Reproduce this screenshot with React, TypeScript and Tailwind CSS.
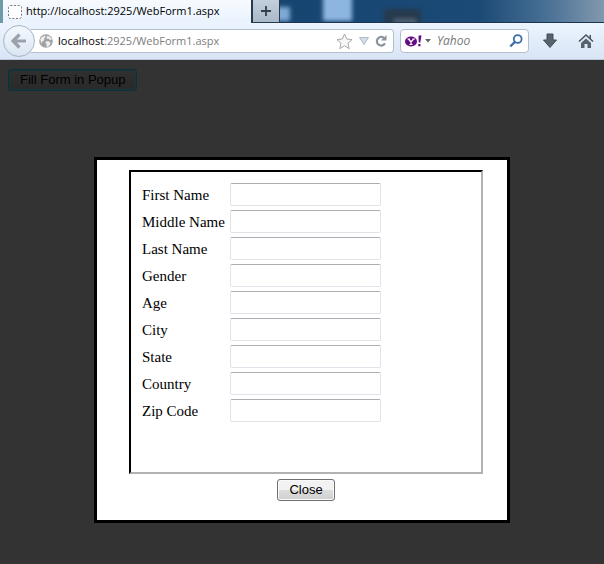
import React from "react";

const FIELDS = [
  "First Name",
  "Middle Name",
  "Last Name",
  "Gender",
  "Age",
  "City",
  "State",
  "Country",
  "Zip Code",
];

const UI_FONT = "font-['Open_Sans','Noto_Sans',sans-serif]";

function TabStrip() {
  return (
    <div className="relative flex h-[23px] overflow-hidden bg-linear-to-r from-[#6f9aa8] from-0% via-[#17456f] via-60% to-[#8099af]">
      <svg
        className="absolute inset-y-0 right-0 h-full w-[352px]"
        viewBox="0 0 352 23"
        preserveAspectRatio="none"
        aria-hidden="true"
      >
        <defs>
          <filter id="soft" x="-30%" y="-30%" width="160%" height="160%">
            <feGaussianBlur stdDeviation="2" />
          </filter>
          <linearGradient id="sky" x1="0" x2="1" y1="0" y2="0">
            <stop offset="0" stopColor="#164470" />
            <stop offset="0.65" stopColor="#1b4a76" />
            <stop offset="0.85" stopColor="#4d7397" />
            <stop offset="1" stopColor="#8299ae" />
          </linearGradient>
        </defs>
        <rect width="352" height="23" fill="url(#sky)" />
        <g filter="url(#soft)">
          <rect x="20" y="7" width="18" height="14" fill="#7fa9d4" />
          <rect x="71" y="-4" width="29" height="25" fill="#8db5e0" />
          <rect x="132" y="9" width="37" height="18" fill="#263a4e" />
          <rect x="142" y="19" width="22" height="6" fill="#4f6475" />
        </g>
        <rect y="22" width="352" height="1" fill="#1c3550" />
      </svg>
      <div className="relative ml-[3px] flex w-[248px] items-center bg-linear-to-b from-[#f7fbff] to-[#e9f2fd] pl-[5px]">
        <svg width="14" height="14" viewBox="0 0 14 14" aria-hidden="true">
          <rect x="0.5" y="0.5" width="13" height="13" rx="2" fill="#fff" stroke="#777" strokeDasharray="2 1.6" />
        </svg>
        <span className="ml-1 whitespace-nowrap text-[11px] text-black">http://localhost:2925/WebForm1.aspx</span>
      </div>
      <button
        type="button"
        aria-label="New tab"
        className="relative flex w-[29px] items-center justify-center border-l-2 border-r border-b border-[#273a4d] bg-linear-to-b from-[#c3cfdb] to-[#aab9c8]"
      >
        <svg width="12" height="12" viewBox="0 0 12 12" aria-hidden="true">
          <path d="M6 1v10M1 6h10" stroke="#33404d" strokeWidth="1.8" />
        </svg>
      </button>
    </div>
  );
}

function NavBar() {
  return (
    <div className="flex h-[37px] items-center border-b border-[#b9c7d8] bg-linear-to-b from-[#ecf4fe] to-[#d8e5f5] pl-[3px] pr-[10px]">
      <button
        type="button"
        aria-label="Back"
        className="relative flex size-8 shrink-0 items-center justify-center rounded-full border border-[#a9b5c3] bg-linear-to-b from-[#f4f8fd] to-[#dbe6f3]"
      >
        <svg width="16" height="16" viewBox="0 0 16 16" aria-hidden="true">
          <path d="M8.5 1.5 2 8l6.500 6.500M2.500 8H15" fill="none" stroke="#9aa2ab" strokeWidth="3.200" />
        </svg>
      </button>
      <div className="-ml-1 flex h-6 min-w-0 flex-1 items-center rounded-r-sm border border-l-0 border-[#b3bfcd] bg-white pl-2 pr-[6px]">
        <svg className="shrink-0" width="14" height="14" viewBox="0 0 14 14" aria-hidden="true">
          <circle cx="7" cy="7" r="6.800" fill="#a2a2a2" />
          <path d="M1.200 5.500 3 3l3-1.500.5 1.500-1.500 1.500.5 1.500-2 1.500-1 2zM8 2l3 .5 2 3-2 .5-1.500-1.500L8 5 7.500 3.500zM6 8l3-1 2.500 1.500-.5 2L9 13l-1.500-.5L7.500 10z" fill="#eee" />
        </svg>
        <div className="ml-[5px] flex-1 whitespace-nowrap text-[11px] text-[#7d7d7d]">
          <span className="text-black">localhost</span>:2925/WebForm1.aspx
        </div>
        <button type="button" aria-label="Bookmark" className="mr-[6px]">
          <svg className="block" width="17" height="17" viewBox="0 0 17 17" aria-hidden="true">
            <path d="m8.500 1 2.200 5 5.300.6-4 3.600 1.200 5.500-4.700-2.900-4.700 2.900L5 10.200 1 6.600 6.300 6z" fill="#f7f7f7" stroke="#a9a9a9" strokeLinejoin="round" />
          </svg>
        </button>
        <button type="button" aria-label="History" className="mr-[6px]">
          <svg className="block" width="10" height="8" viewBox="0 0 10 8" aria-hidden="true">
            <path d="M.5.5h9L5 7.500z" fill="#d5dbe8" stroke="#b1b8c6" />
          </svg>
        </button>
        <button type="button" aria-label="Reload">
          <svg className="block" width="12" height="12" viewBox="0 0 12 12" aria-hidden="true">
            <path d="M8.800 2.800A4.300 4.300 0 1 0 10 8.300" fill="none" stroke="#8b929b" strokeWidth="2.200" />
            <path d="M11.500 0v5.500H6z" fill="#8b929b" />
          </svg>
        </button>
      </div>
      <div className="ml-[6px] flex h-6 w-[129px] items-center rounded-sm border border-[#b3bfcd] bg-white pl-1 pr-[5px]">
        <svg className="shrink-0" width="17" height="12" viewBox="0 0 17 12" aria-hidden="true">
          <ellipse cx="6" cy="6.500" rx="6" ry="5" fill="#650b86" />
          <path d="m3.500 4 2.500 3 2.500-3M6 7v2.500M2.500 4h2.500M7.500 4H10M4.500 9.500h3" fill="none" stroke="#fff" strokeWidth="1.200" />
          <path d="M13.500.5h3l-1.200 7h-1.600zM13.300 9h2.200v2.200h-2.200z" fill="#650b86" />
        </svg>
        <svg className="ml-[3px] shrink-0" width="6" height="4" viewBox="0 0 6 4" aria-hidden="true">
          <path d="M0 0h6L3 3.500z" fill="#666" />
        </svg>
        <input
          type="text"
          aria-label="Search"
          placeholder="Yahoo"
          className="ml-[6px] w-0 min-w-0 flex-1 text-xs italic outline-none placeholder:text-[#777]"
        />
        <button type="button" aria-label="Go">
          <svg className="block" width="14" height="14" viewBox="0 0 14 14" aria-hidden="true">
            <circle cx="8.700" cy="5" r="3.900" fill="none" stroke="#3c6ea8" strokeWidth="1.800" />
            <path d="M5.800 8 1.300 12.500" stroke="#3c6ea8" strokeWidth="2.400" />
          </svg>
        </button>
      </div>
      <button type="button" aria-label="Downloads" className="ml-[14px]">
        <svg className="block" width="14" height="16" viewBox="0 0 14 16" aria-hidden="true">
          <path d="M4 1h6v6h3.500L7 14.500.5 7H4z" fill="#59636e" stroke="#434c56" />
        </svg>
      </button>
      <button type="button" aria-label="Home" className="ml-[21px]">
        <svg className="block" width="16" height="16" viewBox="0 0 16 16" aria-hidden="true">
          <path d="M1 8.500 8 2l7 6.500" fill="none" stroke="#4b555f" strokeWidth="1.600" />
          <path d="M3 10l5-4.500 5 4.500v5H9.500v-4h-3v4H3z" fill="#59636e" />
          <path d="M11.500 2H13v4l-1.500-1.300z" fill="#4b555f" />
        </svg>
      </button>
    </div>
  );
}

function PopupForm() {
  return (
    <div className="absolute inset-x-0 top-[97px] mx-auto w-[416px] border-[3px] border-black bg-white pt-[10px] pb-[19px] pl-2">
      <form className="flex flex-col items-center" onSubmit={(e) => e.preventDefault()}>
        <div className="h-[304px] w-[354px] border-2 border-t-black border-r-[#b2b2b2] border-b-[#b2b2b2] border-l-black p-2">
          <div className="grid grid-cols-[84px_151px] gap-x-1 gap-y-1 p-[3px] font-['Liberation_Serif',serif] text-[15px] leading-6 text-black">
            {FIELDS.map((name) => (
              <React.Fragment key={name}>
                <label htmlFor={name} className="h-[23px] whitespace-nowrap">
                  {name}
                </label>
                <input
                  id={name}
                  type="text"
                  className="h-[23px] w-full rounded-[2px] border border-[#e2e3ea] border-t-[#abadb3] bg-white px-1 text-sm outline-none"
                />
              </React.Fragment>
            ))}
          </div>
        </div>
        <button
          type="button"
          className="mt-[5px] h-[22px] rounded-[3px] border border-[#707070] bg-linear-to-b from-[#f2f2f2] from-50% via-[#dddddd] via-50% to-[#cfcfcf] px-[11px] font-['Liberation_Sans',sans-serif] text-[13px] leading-5 text-black shadow-[inset_0_0_0_1px_#fafafa]"
        >
          Close
        </button>
      </form>
    </div>
  );
}

export default function App() {
  return (
    <div className="flex min-h-screen flex-col bg-[#333333]">
      <header className={UI_FONT}>
        <TabStrip />
        <NavBar />
      </header>
      <main className="relative min-h-[504px] flex-1 px-2 pt-[9px]">
        <button
          type="button"
          className="block h-[22px] rounded-[3px] border border-[#0c3036] bg-linear-to-b from-[#303030] to-[#292929] px-[11px] font-['Liberation_Sans',sans-serif] text-[13px] leading-5 text-black shadow-[inset_0_0_0_1px_#14383e]"
        >
          Fill Form in Popup
        </button>
        <PopupForm />
      </main>
    </div>
  );
}
